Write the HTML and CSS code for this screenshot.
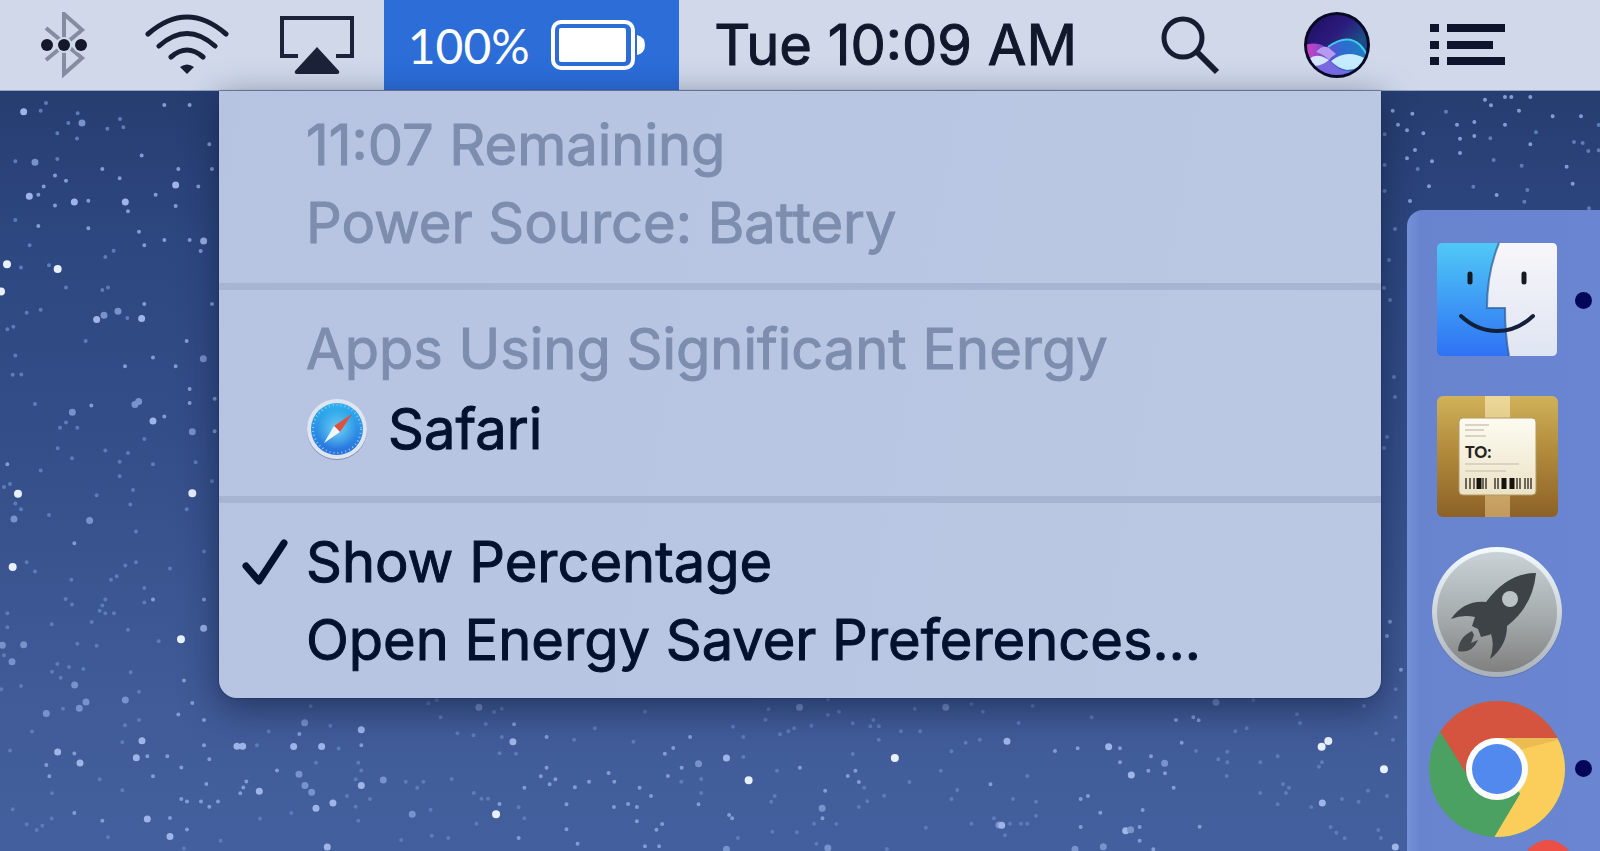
FILE: index.html
```html
<!DOCTYPE html>
<html lang="en">
<head>
<meta charset="utf-8">
<title>Desktop</title>
<link rel="stylesheet" href="styles.css">
</head>
<body class="desktop">
<svg class="stars" width="1600" height="851" viewBox="0 0 1600 851" aria-hidden="true">
  <g transform="translate(0 90) scale(.3333 .4853)">
    <path class="star faint" d="M122 43h0M138 27h0M205 68h0M233 48h0M172 89h0M231 100h0M322 80h0M360 60h0M370 77h0M46 147h0M172 142h0M46 268h0M89 320h0M63 366h0M147 361h0M198 407h0M307 412h0M324 407h0M316 344h0M341 331h0M80 459h0M122 453h0M22 493h0M40 488h0M46 547h0M38 587h0M64 586h0M257 517h0M382 470h0M105 647h0M180 696h0M198 685h0M232 696h0M173 738h0M216 759h0M316 743h0M384 748h0M359 766h0M359 796h0M433 719h0M459 771h0M587 767h0M122 784h0M12 818h0M30 812h0M46 852h0M63 864h0M147 876h0M290 835h0M399 824h0M391 854h0M408 910h0M560 864h0M636 806h0M612 951h0M105 992h0M80 973h0M376 980h0M408 973h0M214 1009h0M333 1009h0M350 1002h0M510 986h0M433 1026h0M197 1049h0M216 1060h0M316 1050h0M307 1062h0M299 1073h0M316 1078h0M342 1078h0M275 1096h0M433 1056h0M22 1078h0M22 1107h0M155 1101h0M384 1112h0M232 1141h0M290 1145h0M476 1136h0M12 1165h0M172 1183h0M156 1199h0M182 1211h0M207 1189h0M250 1193h0M392 1200h0M63 1228h0M4 1235h0M189 1275h0M96 1322h0M30 1361h0M367 1344h0M375 1309h0M417 1298h0M417 1240h0M38 1482h0M80 1513h0M110 1525h0M127 1516h0M155 1501h0M367 1443h0M299 1420h0M156 1449h0M324 1540h0M806 1322h0M932 1270h0M991 1310h0M1016 1357h0M1041 1455h0M1067 1477h0M1110 1461h0M948 1386h0M1075 1386h0M1067 1420h0M1084 1402h0M1075 1506h0M874 1490h0M780 1501h0M771 1350h0M662 1547h0M552 1563h0"/>
    <path class="star small" d="M493 31h0M569 31h0M628 112h0M425 135h0M535 163h0M636 163h0M307 163h0M359 182h0M165 176h0M198 187h0M131 199h0M115 216h0M165 238h0M265 228h0M467 216h0M595 199h0M527 239h0M384 250h0M115 280h0M265 285h0M417 292h0M433 320h0M493 309h0M569 309h0M602 332h0M636 441h0M433 441h0M560 517h0M459 551h0M375 569h0M527 569h0M569 616h0M569 645h0M493 673h0M274 650h0M644 636h0M644 703h0M22 771h0M223 934h0M459 1050h0M612 1050h0M552 1217h0M577 1263h0M535 1287h0M612 1298h0M612 1350h0M628 1379h0M442 1373h0M502 1373h0M544 1396h0M459 1414h0M223 1367h0M139 1391h0M148 1414h0M619 1430h0M544 1461h0M561 1466h0M603 1466h0M628 1477h0M654 1466h0M510 1500h0M561 1524h0M307 1506h0M223 1490h0M721 1449h0M730 1437h0M739 1425h0M831 1402h0M1084 1350h0M898 1327h0"/>
    <path class="star mid" d="M71 45h0M88 219h0M223 231h0M376 231h0M527 196h0M611 311h0M290 473h0M425 471h0M459 682h0M426 1341h0M409 1376h0M173 1364h0M240 1387h0M442 1502h0M510 1538h0M611 1109h0M1084 1318h0M965 1353h0M881 1353h0M778 1445h0M1084 1433h0M982 1560h0M711 1352h0M728 1352h0M948 1480h0M999 1469h0"/>
    <path class="star mid faint-mid" d="M246 68h0M105 149h0M312 464h0M354 456h0M610 554h0M217 664h0M405 648h0M416 642h0M577 704h0M269 887h0M42 884h0M7 1144h0M71 1143h0M36 1178h0M224 1226h0M376 1257h0M139 1285h0M238 1274h0M258 1261h0M914 1304h0M897 1410h0M915 1433h0M935 1447h0M1150 1422h0"/>
    <path class="star bright" d="M21 359h0M3 415h0M173 369h0M54 832h0M577 831h0M38 983h0M543 1132h0"/>
  </g>
  <g transform="translate(400 600) scale(.3827 .3333)">
    <path class="star faint" d="M74 310h0M96 300h0M246 336h0M266 326h0M106 352h0M224 372h0M150 400h0M192 406h0M266 411h0M260 460h0M303 461h0M455 419h0M509 385h0M610 425h0M640 335h0M870 380h0M15 545h0M61 545h0M45 563h0M135 537h0M193 579h0M213 596h0M230 596h0M80 629h0M83 707h0M3 720h0M126 714h0M200 671h0M310 622h0M325 655h0M897 411h0M897 471h0M735 545h0M787 537h0M787 579h0M963 328h0M955 359h0M993 403h0M1015 394h0M1030 385h0M1075 377h0M1118 344h0M1147 335h0M1183 370h0M1229 379h0M1237 360h0M1251 379h0M1251 419h0M1309 394h0M1359 394h0M1345 326h0M1493 312h0M1523 335h0M1478 428h0M1515 419h0M1441 454h0M1413 512h0M1331 546h0M1265 587h0M1221 604h0M1199 621h0M1213 563h0M1441 597h0M1456 570h0M1493 671h0M1374 683h0M1552 655h0M973 695h0M985 512h0M1183 462h0M1118 298h0M883 714h0M970 605h0M979 588h0M1037 697h0M1140 672h0M1082 671h0M1088 731h0M1272 747h0"/>
    <path class="star small" d="M383 411h0M383 503h0M368 529h0M406 538h0M391 553h0M457 562h0M494 545h0M545 519h0M560 545h0M626 563h0M656 588h0M596 612h0M619 621h0M559 621h0M435 613h0M435 688h0M464 731h0M310 714h0M619 664h0M685 672h0M670 689h0M640 739h0M677 739h0M692 461h0M714 444h0M758 411h0M736 503h0M700 528h0M780 613h0M860 645h0M868 655h0M325 563h0M260 612h0M1045 503h0M1190 512h0M1170 528h0M1199 546h0M1111 572h0M1104 655h0M1543 553h0M298 373h0"/>
    <path class="star mid faint-mid" d="M206 322h0M1044 322h0M1426 322h0M780 491h0M32 643h0M1103 625h0M853 748h0M1118 744h0M1565 675h0"/>
    <path class="star mid" d="M295 425h0M853 474h0"/>
    <path class="star bright" d="M251 643h0M911 541h0M1293 474h0"/>
  </g>
  <g transform="translate(1000 600) scale(.3333)">
    <path class="star faint" d="M98 318h0M56 369h0M275 352h0M706 394h0M740 385h0M588 453h0M682 455h0M655 478h0M682 487h0M680 528h0M781 487h0M833 469h0M781 579h0M849 552h0M867 563h0M858 579h0M833 613h0M891 343h0M900 369h0M957 500h0M966 487h0M1092 318h0M1128 400h0M1179 419h0M1187 352h0M1187 268h0M1104 572h0M1161 588h0M1076 605h0M1026 597h0M934 621h0M992 681h0M1009 698h0M1034 715h0M1135 690h0M1143 714h0M82 528h0M39 597h0M108 605h0M108 647h0M30 671h0M63 671h0M82 671h0M15 706h0M760 300h0"/>
    <path class="star small" d="M528 360h0M580 352h0M596 361h0M545 428h0M165 453h0M233 445h0M360 445h0M360 487h0M453 469h0M445 512h0M495 520h0M521 563h0M428 630h0M301 638h0M242 597h0M264 588h0M242 681h0M419 681h0M419 722h0M599 680h0M460 748h0M1170 65h0M1161 108h0M1203 209h0"/>
    <path class="star mid" d="M21 424h0M326 440h0M394 525h0M377 692h0M5 676h0M967 609h0M1186 741h0"/>
    <path class="star mid faint-mid" d="M494 490h0M392 689h0M310 740h0M225 748h0M648 307h0"/>
    <path class="star bright" d="M985 423h0M965 440h0M1152 508h0"/>
  </g>
  <g transform="translate(1370 85) scale(.3333)">
    <path class="star faint" d="M228 80h0M143 252h0M371 225h0M361 160h0M498 142h0M612 171h0M638 174h0M655 198h0M686 196h0M472 315h0M310 305h0M463 350h0M657 370h0M44 240h0M44 318h0M686 120h0"/>
    <path class="star small" d="M68 77h0M127 86h0M84 119h0M111 136h0M160 145h0M135 195h0M111 220h0M186 229h0M177 304h0M120 348h0M261 119h0M313 111h0M270 161h0M313 153h0M270 204h0M345 44h0M363 61h0M405 36h0M424 36h0M481 36h0M447 77h0M405 119h0M481 178h0M548 94h0M633 94h0M590 245h0M608 296h0M380 330h0"/>
    <path class="star faint" d="M44 148h0M455 242h0"/>
  </g>
  <path class="star faint" d="M1395 229h0M1389 260h0M1384 288h0M1390 300h0M1394 377h0M1395 397h0M1387 437h0M1384 448h0"/>
</svg>

<header class="menubar">
  <button class="status bluetooth" aria-label="Bluetooth">
    <svg width="46" height="66" viewBox="0 0 46 66">
      <path d="M5 16L41 46L23 62V2L41 18L5 48" fill="none" stroke="#858ca0" stroke-width="4"/>
      <circle cx="6" cy="33" r="8" fill="#d0d8ea"/><circle cx="23" cy="33" r="8" fill="#d0d8ea"/><circle cx="40" cy="33" r="8" fill="#d0d8ea"/>
      <circle cx="6" cy="33" r="6" fill="#13182a"/><circle cx="23" cy="33" r="6" fill="#13182a"/><circle cx="40" cy="33" r="6" fill="#13182a"/>
    </svg>
  </button>
  <button class="status wifi" aria-label="Wi-Fi">
    <svg width="84" height="62" viewBox="0 0 84 62">
      <path d="M3 20Q42-14 81 20M14 32Q42 7 70 32M26 43Q42 29 58 43" fill="none" stroke="#171d31" stroke-width="5" stroke-linecap="round"/>
      <path d="M35 53Q42 48 49 53L42 60Z" fill="#171d31"/>
    </svg>
  </button>
  <button class="status airplay" aria-label="AirPlay">
    <svg width="76" height="60" viewBox="0 0 76 60">
      <path d="M19 41H3V3H73V41H57" fill="none" stroke="#1c2238" stroke-width="4"/>
      <path d="M38 32L60 56Q61 59 58 59H18Q15 59 16 56Z" fill="#1c2238"/>
    </svg>
  </button>
  <button class="status battery" aria-expanded="true">
    <span>100%</span>
    <svg width="96" height="52" viewBox="0 0 96 52" aria-hidden="true">
      <rect x="3" y="3" width="80" height="46" rx="8" fill="none" stroke="#fff" stroke-width="4"/>
      <rect x="9" y="9" width="67" height="34" rx="2" fill="#fff"/>
      <path d="M87 16Q95 18 95 26T87 36Z" fill="#fff"/>
    </svg>
  </button>
  <button class="status clock">Tue 10:09 AM</button>
  <button class="status search" aria-label="Search">
    <svg width="60" height="60" viewBox="0 0 60 60">
      <circle cx="23" cy="23" r="19" fill="none" stroke="#171d31" stroke-width="5"/>
      <path d="M37 37L57 57" stroke="#171d31" stroke-width="6"/>
    </svg>
  </button>
  <button class="status siri" aria-label="Siri">
    <svg width="68" height="68" viewBox="0 0 68 68">
      <defs>
        <linearGradient id="siri-sky" x1="0" y1="0" x2="1" y2="1"><stop offset="0" stop-color="#1a0d5c"/><stop offset=".4" stop-color="#2c1a7c"/><stop offset=".65" stop-color="#1b4f86"/><stop offset="1" stop-color="#152a9c"/></linearGradient>
        <linearGradient id="siri-wave" x1="0" y1="0" x2="1" y2="0"><stop offset="0" stop-color="#d63fc0"/><stop offset=".4" stop-color="#5a52d0"/><stop offset=".6" stop-color="#2a6ed0"/><stop offset="1" stop-color="#1c7fc0"/></linearGradient>
        <clipPath id="siri-clip"><circle cx="34" cy="34" r="30"/></clipPath>
      </defs>
      <circle cx="34" cy="34" r="33" fill="#070925"/>
      <g clip-path="url(#siri-clip)">
        <rect width="68" height="68" fill="url(#siri-sky)"/>
        <path d="M2 34Q14 30 24 37Q42 22 56 34Q64 40 66 48L60 62H8Z" fill="url(#siri-wave)"/>
        <path d="M25 36Q44 22 57 34Q62 39 65 46" fill="none" stroke="#43cbe6" stroke-width="2"/>
        <path d="M10 54Q20 46 27 50Q36 62 52 60L40 68H20Z" fill="#7a6be4"/>
        <path d="M6 48Q14 41 26 49Q16 57 8 54Z" fill="#d4e6ff"/>
        <path d="M28 50Q44 37 63 48Q58 59 44 59Q34 57 28 50Z" fill="#c6ecff"/>
        <path d="M13 41Q20 33 26 37L33 43Q28 46 26 49Q20 43 13 41Z" fill="#b69af0"/>
      </g>
    </svg>
  </button>
  <button class="status notices" aria-label="Notification Center">
    <svg width="76" height="44" viewBox="0 0 76 44" fill="#0e142b">
      <path d="M0 1h9v8H0zM17 1h58v8H17zM0 18h9v8H0zM17 18h46v8H17zM0 34h9v8H0zM17 34h58v8H17z"/>
    </svg>
  </button>
</header>

<main class="workspace">
  <nav class="menu" aria-label="Battery">
    <section class="group">
      <p class="row muted">11:07 Remaining</p>
      <p class="row muted">Power Source: Battery</p>
    </section>
    <section class="group">
      <p class="row muted">Apps Using Significant Energy</p>
      <button class="row app">
        <svg width="62" height="62" viewBox="0 0 62 62" aria-hidden="true">
          <defs><linearGradient id="safari-face" x1="0" y1="0" x2="0" y2="1"><stop offset="0" stop-color="#2fb2ee"/><stop offset="1" stop-color="#2a70dc"/></linearGradient>
          <radialGradient id="safari-glow"><stop offset="0" stop-color="#6cd0f6"/><stop offset="1" stop-color="#6cd0f6" stop-opacity="0"/></radialGradient></defs>
          <circle cx="31" cy="32" r="30" fill="#8791ab"/>
          <circle cx="31" cy="31" r="30" fill="#dfe6f2"/>
          <circle cx="31" cy="31" r="26" fill="url(#safari-face)"/>
          <circle cx="31" cy="31" r="20" fill="url(#safari-glow)"/>
          <circle cx="31" cy="31" r="24" fill="none" stroke="#8cc6f0" stroke-width="2" stroke-dasharray="1 3"/>
          <path d="M46 16L34 34L28 28Z" fill="#e2503c"/>
          <path d="M18 45L28 28L34 34Z" fill="#f4f7fb"/>
        </svg>
        Safari
      </button>
    </section>
    <section class="group">
      <button class="row" role="menuitemcheckbox" aria-checked="true">
        <svg class="tick" width="46" height="46" viewBox="0 0 46 46" aria-hidden="true"><path d="M4 27L17 42L42 4" fill="none" stroke="#04112e" stroke-width="7" stroke-linecap="round" stroke-linejoin="round"/></svg>
        Show Percentage
      </button>
      <button class="row">Open Energy Saver Preferences…</button>
    </section>
  </nav>

  <aside class="dock" aria-label="Dock">
    <button class="slot running" aria-label="Finder">
      <svg width="136" height="156" viewBox="0 0 136 156">
        <defs>
          <linearGradient id="finder-left" x1="0" y1="0" x2="0" y2="1"><stop offset="0" stop-color="#50c8f6"/><stop offset="1" stop-color="#2e72f4"/></linearGradient>
          <linearGradient id="finder-right" x1="0" y1="0" x2="0" y2="1"><stop offset="0" stop-color="#f7f6fa"/><stop offset="1" stop-color="#dfe5f2"/></linearGradient>
        </defs>
        <rect x="8" y="21" width="120" height="113" rx="5" fill="url(#finder-left)"/>
        <path d="M70 21H123Q128 21 128 26V129Q128 134 123 134H80Q76 112 76 86H58Q58 50 70 21Z" fill="url(#finder-right)"/>
        <path d="M70 21Q58 50 58 86H76Q76 112 80 134" fill="none" stroke="#2a5b96" stroke-opacity=".7" stroke-width="2"/>
        <path d="M41 52v8M95 52v8" stroke="#141a22" stroke-width="5" stroke-linecap="round"/>
        <path d="M32 94Q48 109 68 109T104 94" fill="none" stroke="#14203a" stroke-width="4" stroke-linecap="round"/>
      </svg>
    </button>
    <button class="slot" aria-label="Package">
      <svg width="136" height="156" viewBox="0 0 136 156">
        <defs>
          <linearGradient id="box" x1="0" y1="0" x2="0" y2="1"><stop offset="0" stop-color="#d0b25a"/><stop offset=".4" stop-color="#b58f3e"/><stop offset="1" stop-color="#8d6127"/></linearGradient>
          <linearGradient id="tape" x1="0" y1="0" x2="0" y2="1"><stop offset="0" stop-color="#ecd999"/><stop offset="1" stop-color="#c2995c"/></linearGradient>
          <linearGradient id="label" x1="0" y1="0" x2="0" y2="1"><stop offset="0" stop-color="#fdfcf2"/><stop offset="1" stop-color="#ece2c6"/></linearGradient>
        </defs>
        <rect x="8" y="18" width="121" height="121" rx="6" fill="url(#box)"/>
        <path d="M56 18h25v121H56z" fill="url(#tape)"/>
        <rect x="30" y="40" width="77" height="77" rx="4" fill="url(#label)" stroke="#b49a62"/>
        <path d="M36 47h24M36 52h19M36 58h21M36 86h54M36 93h41" stroke="#d8d3c3" stroke-width="2"/>
        <text class="label-text" x="36" y="80">TO:</text>
        <path d="M37 100v11M41 100v11M45 100v11M54 100v11M57 100v11M66 100v11M69 100v11M84 100v11M88 100v11M91 100v11M96 100v11M99 100v11M102 100v11" stroke="#6b6658" stroke-width="2"/>
        <path d="M50 100v11M75 100v11M83 100v11" stroke="#14130f" stroke-width="5"/>
      </svg>
    </button>
    <button class="slot" aria-label="Launchpad">
      <svg width="136" height="156" viewBox="0 0 136 156">
        <defs>
          <linearGradient id="pad" x1="0" y1="0" x2="0" y2="1"><stop offset="0" stop-color="#c9d2d6"/><stop offset=".55" stop-color="#a5abad"/><stop offset="1" stop-color="#80807f"/></linearGradient>
          <linearGradient id="pad-rim" x1="0" y1="0" x2="0" y2="1"><stop offset="0" stop-color="#f4fbff"/><stop offset="1" stop-color="#a9b0b8"/></linearGradient>
        </defs>
        <circle cx="68" cy="79" r="65" fill="#5a74b4"/>
        <circle cx="68" cy="78" r="65" fill="url(#pad-rim)"/>
        <circle cx="68" cy="78" r="60" fill="url(#pad)"/>
        <path d="M107 39Q78 39 57 68Q35 66 22 85Q34 80 46 83L43 92L49 95L52 103L60 101L62 100Q66 112 61 125Q78 112 78 92Q104 72 107 39Z" fill="#3d4347"/>
        <circle cx="81" cy="65" r="8" fill="#bcc3c7"/>
        <path d="M43 97Q30 103 29 117Q43 120 49 106L42 109L45 101Z" fill="#44494c"/>
      </svg>
    </button>
    <button class="slot running" aria-label="Chrome">
      <svg width="136" height="156" viewBox="0 0 136 156">
        <defs><clipPath id="chrome-disc"><circle cx="68" cy="79" r="68"/></clipPath></defs>
        <g clip-path="url(#chrome-disc)">
          <path d="M0 0H136V156H0Z" fill="#4aa162"/>
          <path d="M12 43L0 20V0H136V48H68L37 83Z" fill="#d5543f"/>
          <path d="M68 48H136V156H60L91 104Z" fill="#fbce5b"/>
          <path d="M75 48H136L90 60Z" fill="#8a5a1c" opacity=".15"/>
        </g>
        <circle cx="68" cy="79" r="31" fill="#fff"/>
        <circle cx="68" cy="79" r="25" fill="#5289ee"/>
      </svg>
    </button>
    <button class="slot" aria-label="Calendar">
      <svg width="136" height="156" viewBox="0 0 136 156"><circle cx="119" cy="19" r="25" fill="#ec4f45"/></svg>
    </button>
  </aside>
</main>
</body>
</html>
```
FILE: styles.css
```css
* { box-sizing: border-box; }

.desktop {
  margin: 0;
  height: 100vh;
  overflow: hidden;
  display: flex;
  flex-direction: column;
  background: linear-gradient(#263d70 90px, #2d4780 240px, #334d88 420px, #405b97 700px, #435f9d);
  font-family: Inter, "Liberation Sans", sans-serif;
  color: #04112e;
}

button {
  border: 0;
  padding: 0;
  background: none;
  font: inherit;
  color: inherit;
}

svg { display: block; flex: none; }

.stars { position: absolute; top: 0; left: 0; }
.star { fill: none; stroke-linecap: round; vector-effect: non-scaling-stroke; }
.faint { stroke: #5f7cba; stroke-width: 4px; }
.small { stroke: #839dd4; stroke-width: 4px; }
.mid { stroke: #9fb5e8; stroke-width: 7px; }
.faint-mid { stroke: #7892cb; }
.bright { stroke: #e8f0ff; stroke-width: 8px; }

.menubar {
  position: relative;
  flex: none;
  display: flex;
  justify-content: flex-end;
  height: 91px;
  padding-right: 94px;
  background: #d0d8ea;
  border-bottom: 1px solid #96a3c2;
}
.status { display: flex; align-items: center; white-space: nowrap; }
.bluetooth { margin-right: 58px; }
.wifi { margin-right: 50px; }
.airplay { margin-right: 29px; }
.battery {
  width: 295px;
  padding-right: 10px;
  justify-content: center;
  gap: 20px;
  background: #2c6dd8;
  color: #fff;
  font: 400 48px Lato, sans-serif;
}
.clock {
  margin: 0 83px 0 35px;
  font-size: 56px;
  color: #11182c;
  -webkit-text-stroke: 1px;
}
.search { margin-right: 83px; }
.siri { margin-right: 59px; }

.workspace {
  position: relative;
  flex: 1;
  min-height: 0;
  display: flex;
  align-items: flex-start;
  gap: 26px;
  padding-left: 219px;
}

.menu {
  flex: 1;
  background: linear-gradient(100deg, #b6c4e2, #bbc8e3);
  border-radius: 0 0 18px 18px;
  box-shadow: 0 10px 36px rgba(16, 28, 62, .6), 0 0 2px #1c2b55;
  font-size: 56px;
  -webkit-text-stroke: 1px;
}
.group { padding: 15px 0 21px; }
.group + .group { padding: 20px 0 19px; border-top: 7px solid #a7b5d3; }
.group:nth-child(2) { padding-bottom: 26px; }
.row {
  position: relative;
  display: flex;
  align-items: center;
  width: 100%;
  height: 78px;
  margin: 0;
  padding-left: 87px;
  white-space: nowrap;
}
.muted { color: #7d8dae; }
.app { height: 82px; gap: 20px; }
.tick { position: absolute; left: 23px; top: 16px; }

.dock {
  flex: none;
  align-self: stretch;
  width: 193px;
  margin-top: 119px;
  padding: 12px 0 0 22px;
  overflow: hidden;
  border-radius: 16px 0 0 0;
  background: linear-gradient(90deg, #7391d8, #6884cf 14px, #6a86d2);
}
.slot { display: flex; align-items: center; gap: 10px; }
.slot svg { overflow: visible; }
.running::after {
  content: "";
  width: 17px;
  height: 17px;
  border-radius: 50%;
  background: #04065a;
}
.label-text { font: 900 16px Lato, sans-serif; fill: #26241f; }
```
